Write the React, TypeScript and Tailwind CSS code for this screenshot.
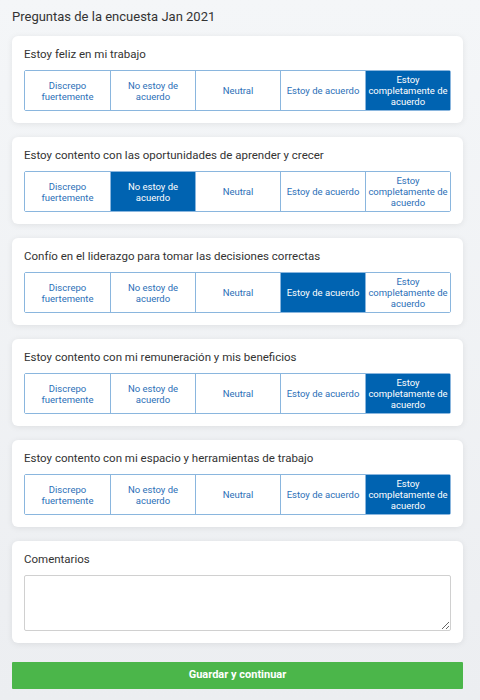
import { useState } from 'react'

const options = [
  'Discrepo fuertemente',
  'No estoy de acuerdo',
  'Neutral',
  'Estoy de acuerdo',
  'Estoy completamente de acuerdo',
]

const initial = [
  { q: 'Estoy feliz en mi trabajo', a: 4 },
  { q: 'Estoy contento con las oportunidades de aprender y crecer', a: 1 },
  { q: 'Confío en el liderazgo para tomar las decisiones correctas', a: 3 },
  { q: 'Estoy contento con mi remuneración y mis beneficios', a: 4 },
  { q: 'Estoy contento con mi espacio y herramientas de trabajo', a: 4 },
]

export default function App() {
  const [answers, setAnswers] = useState(initial.map(i => i.a))
  const [comment, setComment] = useState('')

  const pick = (qi: number, oi: number) => {
    setAnswers(prev => prev.map((v, i) => (i === qi ? oi : v)))
  }

  return (
    <div
      className="min-h-[700px] w-[480px] bg-gradient-to-b from-[#f4f6f8] to-[#eceef1] px-3 pt-[9px] pb-3 text-[#333]"
      style={{ fontFamily: 'Roboto, "Liberation Sans", sans-serif' }}
    >
      <h1 className="text-[13px] leading-[16px] text-[#333]">Preguntas de la encuesta Jan 2021</h1>

      <div className="mt-[11px] flex w-[451px] flex-col gap-[14px]">
        {initial.map((item, qi) => (
          <div key={qi} className="h-[87px] rounded-md bg-white px-3 pt-[11px] shadow-[0_1px_6px_rgba(0,0,0,0.08)]">
            <p className="text-[11.5px] leading-[14px] text-[#333]">{item.q}</p>
            <div className="mt-[9px] grid h-[41px] grid-cols-5 rounded-[2px] border border-[#8ab6de]">
              {options.map((opt, oi) => {
                const sel = answers[qi] === oi
                return (
                  <button
                    key={oi}
                    type="button"
                    onClick={() => pick(qi, oi)}
                    className={
                      'flex items-center justify-center px-[1px] text-center text-[9.5px] leading-[11px] ' +
                      (oi > 0 ? 'border-l border-[#8ab6de] ' : '') +
                      (sel ? 'bg-[#0063b1] text-white' : 'bg-white text-[#2c6fb7]')
                    }
                  >
                    {oi === 4 ? (
                      <span>
                        Estoy
                        <br />
                        completamente de
                        <br />
                        acuerdo
                      </span>
                    ) : (
                      opt
                    )}
                  </button>
                )
              })}
            </div>
          </div>
        ))}

        <div className="h-[102px] rounded-md bg-white px-3 pt-[11px] shadow-[0_1px_6px_rgba(0,0,0,0.08)]">
          <p className="text-[11.5px] leading-[14px] text-[#333]">Comentarios</p>
          <textarea
            value={comment}
            onChange={e => setComment(e.target.value)}
            className="mt-[9px] block h-[56px] w-full rounded-[2px] border border-[#d0d0d0] bg-white p-1 text-[11px] outline-none"
          />
        </div>
      </div>

      <button
        type="button"
        className="mt-[19px] block h-[27px] w-[451px] rounded-[1px] bg-[#4bb64a] text-[11px] font-bold text-white"
      >
        Guardar y continuar
      </button>
    </div>
  )
}
